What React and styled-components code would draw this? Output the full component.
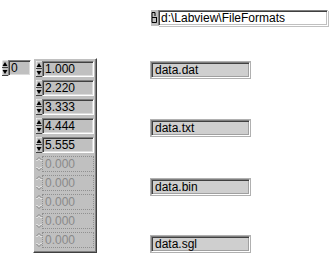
import React from 'react';
import styled, { createGlobalStyle } from 'styled-components';

const Global = createGlobalStyle`
  html, body {
    margin: 0;
    padding: 0;
    background: #fff;
  }
  body {
    font-family: "Liberation Sans", Arial, sans-serif;
  }
`;

const Page = styled.div`
  width: 334px;
  height: 255px;
  display: flex;
  align-items: flex-start;
  background: #fff;
  overflow: hidden;
`;

const LeftGroup = styled.div`
  display: flex;
  align-items: flex-start;
  padding: 58px 0 0 2px;
  gap: 2px;
`;

const Control = styled.div`
  display: flex;
  align-items: stretch;
  height: 16px;
`;

const IndexControl = styled(Control)`
  margin-top: 2px;
`;

const Spin = styled.div`
  width: 6px;
  display: flex;
  flex-direction: column;
  background: #c0c0c0;
`;

const NumBox = styled.div`
  width: ${(p) => p.$w}px;
  box-sizing: border-box;
  background: #c0c0c0;
  border: 1px solid;
  border-color: ${(p) => (p.$dim ? '#909090' : '#808080 #fff #fff #808080')};
  border-style: ${(p) => (p.$dim ? 'dotted' : 'solid')};
  box-shadow: ${(p) => (p.$dim ? 'none' : 'inset 1px 1px 0 #404040, inset -1px -1px 0 #dcdcdc')};
  color: ${(p) => (p.$dim ? '#8a8a8a' : '#000')};
  font-size: 12px;
  line-height: 14px;
  padding-left: 2px;
  white-space: nowrap;
`;

const ArrayFrame = styled.div`
  box-sizing: border-box;
  width: 64px;
  height: 195px;
  background: #c0c0c0;
  border: 1px solid;
  border-color: #fff #404040 #404040 #fff;
  box-shadow: inset -1px -1px 0 #808080;
  padding: 2px 2px 0 2px;
  display: flex;
  flex-direction: column;
  gap: 3px;
`;

const RightCol = styled.div`
  margin-left: 54px;
  padding-top: 10px;
  display: flex;
  flex-direction: column;
`;

const PathRow = styled.div`
  display: flex;
  align-items: stretch;
  height: 16px;
  margin-bottom: 36px;
`;

const PathIcon = styled.div`
  width: 7px;
  display: flex;
  align-items: flex-start;
  padding-top: 2px;
  background: #c0c0c0;
`;

const PathBox = styled.div`
  width: 170px;
  box-sizing: border-box;
  background: #fff;
  border: 1px solid;
  border-color: #808080 #fff #fff #808080;
  box-shadow: inset 1px 1px 0 #404040, inset -1px -1px 0 #c0c0c0, 1px 1px 0 #c0c0c0;
  font-size: 12px;
  line-height: 14px;
  padding-left: 2px;
  white-space: nowrap;
  overflow: hidden;
`;

const Indicator = styled.div`
  width: 99px;
  height: 16px;
  box-sizing: border-box;
  background: #cfcfcf;
  border: 1px solid;
  border-color: #808080 #fff #fff #808080;
  box-shadow: inset 1px 1px 0 #404040, inset -1px -1px 0 #a0a0a0, 0 0 0 1px #b0b0b0;
  font-size: 12px;
  line-height: 14px;
  padding-left: 3px;
  margin-bottom: ${(p) => p.$gap}px;
`;

function Spinner({ dim }) {
  if (dim) {
    return (
      <Spin>
        <svg width="6" height="16" viewBox="0 0 6 16">
          <path d="M0.5 5 L3 2.5 L5.5 5" fill="none" stroke="#fff" strokeWidth="1" />
          <path d="M0.5 4 L3 1.5 L5.5 4" fill="none" stroke="#808080" strokeWidth="1" />
          <path d="M0.5 11 L3 13.5 L5.5 11" fill="none" stroke="#fff" strokeWidth="1" />
          <path d="M0.5 12 L3 14.5 L5.5 12" fill="none" stroke="#808080" strokeWidth="1" />
        </svg>
      </Spin>
    );
  }
  return (
    <Spin>
      <svg width="6" height="16" viewBox="0 0 6 16">
        <rect x="0" y="0" width="6" height="16" fill="#c0c0c0" />
        <path d="M0 0 H6 M0 0 V16" stroke="#fff" strokeWidth="1" />
        <path d="M0 7.5 H6" stroke="#404040" strokeWidth="1" />
        <path d="M0.5 6 L3 2 L5.5 6 Z" fill="#000" />
        <path d="M0.5 10 L3 14 L5.5 10 Z" fill="#000" />
        <path d="M0 15.5 H6" stroke="#404040" strokeWidth="1" />
      </svg>
    </Spin>
  );
}

const values = ['1.000', '2.220', '3.333', '4.444', '5.555', '0.000', '0.000', '0.000', '0.000', '0.000'];

const files = [
  { name: 'data.dat', gap: 42 },
  { name: 'data.txt', gap: 43 },
  { name: 'data.bin', gap: 41 },
  { name: 'data.sgl', gap: 0 },
];

export default function App() {
  return (
    <Page>
      <Global />
      <LeftGroup>
        <IndexControl>
          <Spinner />
          <NumBox $w={23}>0</NumBox>
        </IndexControl>
        <ArrayFrame>
          {values.map((v, i) => (
            <Control key={i}>
              <Spinner dim={i >= 5} />
              <NumBox $w={52} $dim={i >= 5}>{v}</NumBox>
            </Control>
          ))}
        </ArrayFrame>
      </LeftGroup>
      <RightCol>
        <PathRow>
          <PathIcon>
            <svg width="7" height="11" viewBox="0 0 7 11">
              <path d="M1 0.5 H4 M1 0.5 V5.5 H6 M1 5.5 V10.5 H5.5 V6" fill="none" stroke="#000" strokeWidth="1" />
              <path d="M4 0.5 V4" stroke="#000" strokeWidth="1" />
            </svg>
          </PathIcon>
          <PathBox>d:\Labview\FileFormats</PathBox>
        </PathRow>
        {files.map((f) => (
          <Indicator key={f.name} $gap={f.gap}>{f.name}</Indicator>
        ))}
      </RightCol>
    </Page>
  );
}
